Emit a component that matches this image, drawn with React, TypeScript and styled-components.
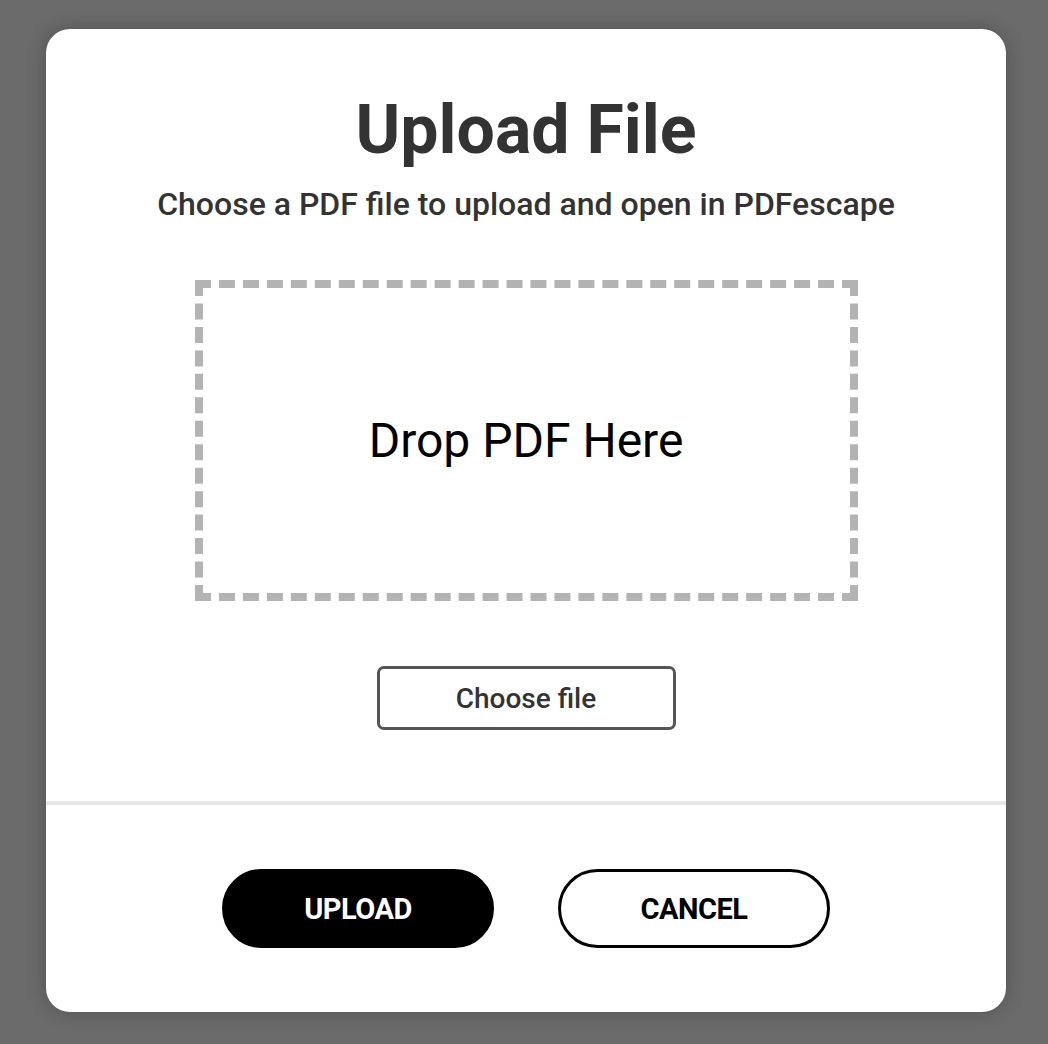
import React from "react";
import styled, { createGlobalStyle } from "styled-components";

const GlobalStyle = createGlobalStyle`
  html, body {
    margin: 0;
    padding: 0;
    background: #6b6b6b;
  }
  body {
    font-family: Roboto, "Liberation Sans", Arial, sans-serif;
  }
`;

const Overlay = styled.div`
  min-height: 100vh;
  display: flex;
  justify-content: center;
  align-items: flex-start;
  padding-top: 29px;
  box-sizing: border-box;
`;

const Dialog = styled.div`
  width: 960px;
  margin-left: 4px;
  background: #fff;
  border-radius: 24px;
  box-shadow: 0 0 18px rgba(0, 0, 0, 0.25);
  overflow: hidden;
`;

const Body = styled.div`
  display: flex;
  flex-direction: column;
  align-items: center;
  padding: 67px 0 71px;
`;

const Title = styled.h1`
  margin: 0;
  font-size: 68px;
  line-height: 68px;
  font-weight: 700;
  color: #333;
`;

const Subtitle = styled.p`
  margin: 24px 0 0;
  font-size: 32px;
  line-height: 32px;
  font-weight: 500;
  color: #333;
`;

const DropZone = styled.div`
  margin-top: 60px;
  width: 663px;
  height: 321px;
  box-sizing: border-box;
  border: 8px dashed #b3b3b3;
  display: flex;
  align-items: center;
  justify-content: center;
  font-size: 48px;
  color: #000;
`;

const ChooseButton = styled.button`
  margin-top: 65px;
  width: 299px;
  height: 64px;
  box-sizing: border-box;
  border: 3px solid #555;
  border-radius: 7px;
  background: #fff;
  font-family: inherit;
  font-size: 28px;
  font-weight: 500;
  color: #333;
  cursor: pointer;
`;

const Divider = styled.hr`
  margin: 0;
  border: none;
  height: 4px;
  background: #e6e6e6;
`;

const Footer = styled.div`
  display: flex;
  justify-content: center;
  gap: 64px;
  padding: 64px 0;
`;

const PillButton = styled.button<{ $primary?: boolean }>`
  width: 272px;
  height: 79px;
  box-sizing: border-box;
  border-radius: 40px;
  border: 3px solid #000;
  background: ${(p) => (p.$primary ? "#000" : "#fff")};
  color: ${(p) => (p.$primary ? "#fff" : "#000")};
  font-family: inherit;
  font-size: 29px;
  font-weight: 700;
  letter-spacing: -0.5px;
  cursor: pointer;
`;

export default function App() {
  return (
    <>
      <GlobalStyle />
      <Overlay>
        <Dialog>
          <Body>
            <Title>Upload File</Title>
            <Subtitle>Choose a PDF file to upload and open in PDFescape</Subtitle>
            <DropZone>Drop PDF Here</DropZone>
            <ChooseButton>Choose file</ChooseButton>
          </Body>
          <Divider />
          <Footer>
            <PillButton $primary>UPLOAD</PillButton>
            <PillButton>CANCEL</PillButton>
          </Footer>
        </Dialog>
      </Overlay>
    </>
  );
}
